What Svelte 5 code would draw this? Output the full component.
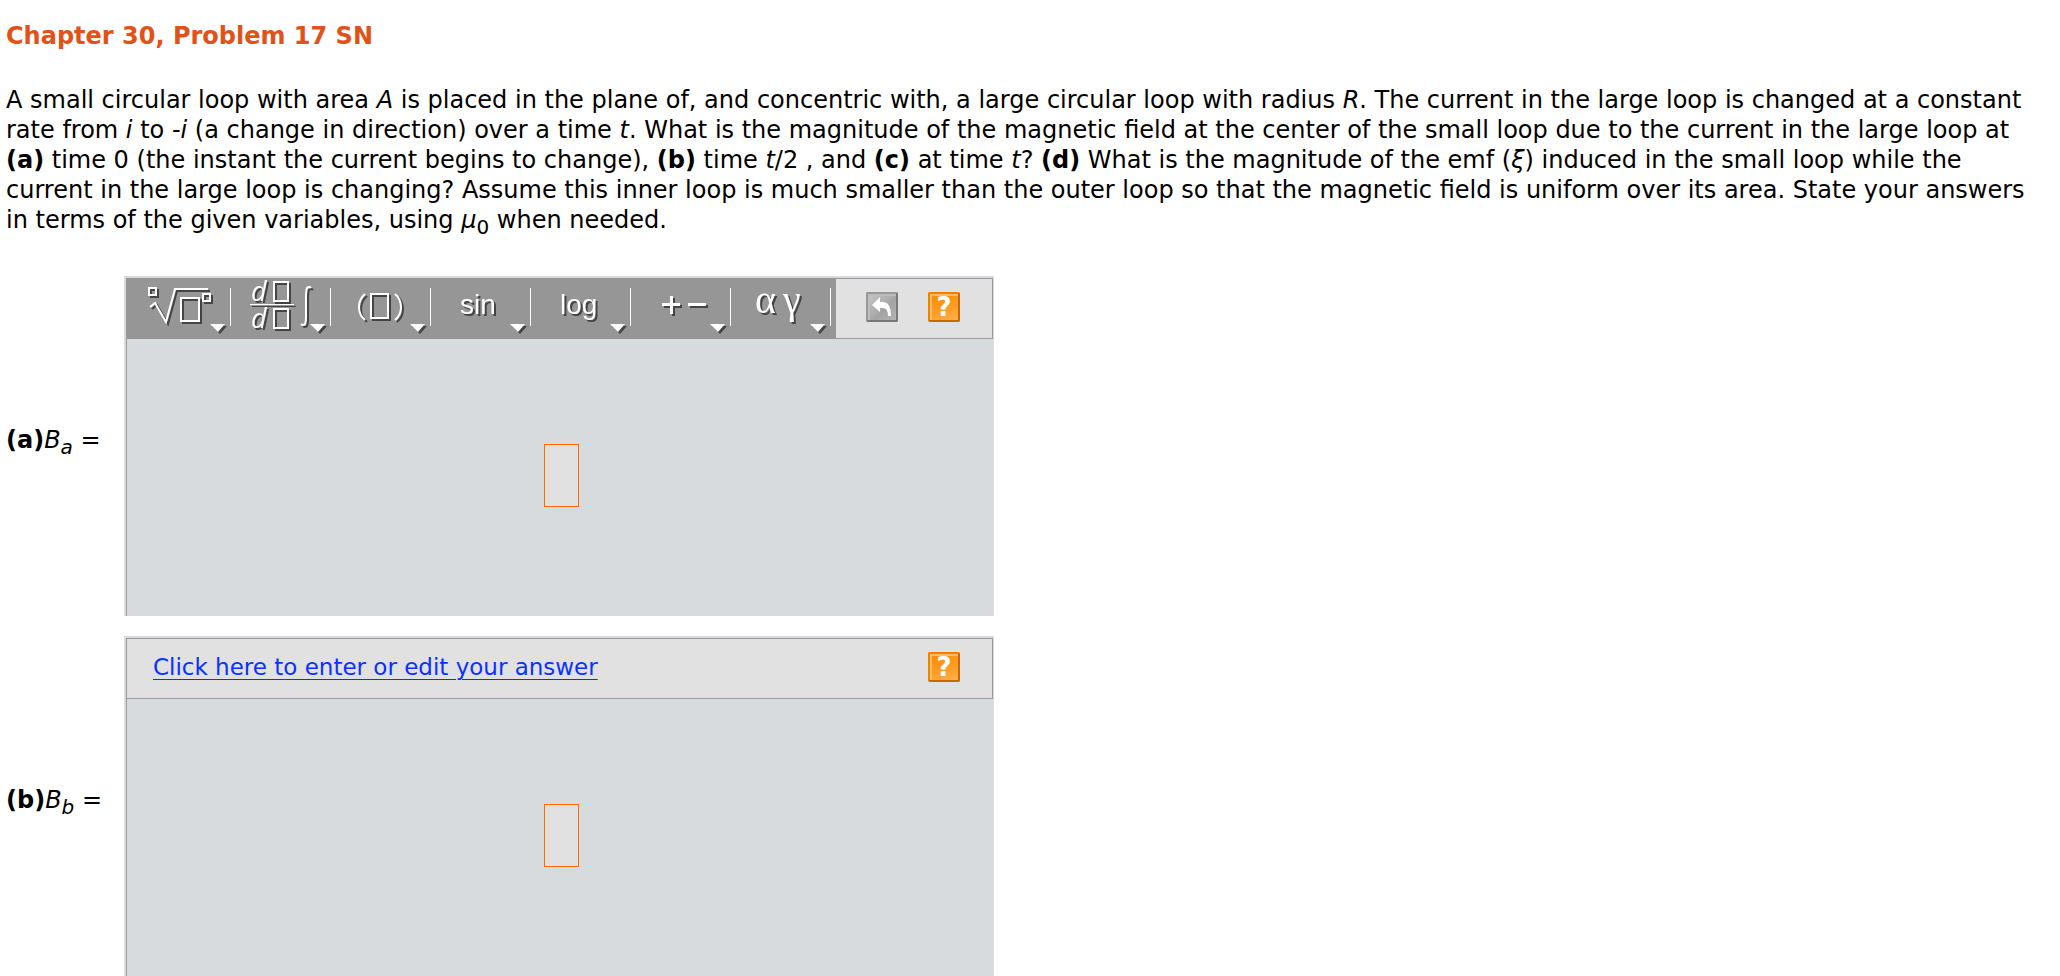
<script>
	const tools = [
		{ id: 'root', label: 'Roots and powers' },
		{ id: 'calculus', label: 'Derivatives and integrals' },
		{ id: 'brackets', label: 'Brackets' },
		{ id: 'sin', label: 'Trigonometric functions' },
		{ id: 'log', label: 'Logarithms' },
		{ id: 'operators', label: 'Operators' },
		{ id: 'greek', label: 'Greek letters' }
	];

	let parts = $state([
		{ id: 'a', editing: true },
		{ id: 'b', editing: false }
	]);

	function edit(e, id) {
		e.preventDefault();
		for (const p of parts) p.editing = p.id === id;
	}
</script>

<svelte:head><title>Chapter 30, Problem 17 SN</title></svelte:head>

{#snippet glyph(id)}
	{#if id === 'root'}
		<rect x="18" y="10" width="7" height="7" />
		<path d="M19 29 L24 25 L35 44 L44 11 H77" />
		<rect x="50" y="20" width="18" height="23" />
		<rect x="72" y="16" width="7" height="7" />
	{:else if id === 'calculus'}
		<text class="d" x="20" y="23">d</text>
		<rect x="43" y="4" width="14" height="19" />
		<path class="thin" d="M19 26.5 H63" />
		<text class="d" x="20" y="50">d</text>
		<rect x="43" y="31" width="14" height="19" />
		<path d="M80 10 Q78 8 76 10 Q75 12 75 17 V39 Q75 44 74 46 Q72 48 70 46" />
	{:else if id === 'brackets'}
		<path d="M34 16 Q28 21 28 29 Q28 37 34 42" />
		<rect x="40" y="16" width="17" height="24" />
		<path d="M64 16 Q70 21 70 29 Q70 37 64 42" />
	{:else if id === 'operators'}
		<path class="thick" d="M31 26.5 H49 M40.5 18 V36 M57 26.5 H75" />
	{:else if id === 'greek'}
		<text class="greek" x="24" y="35">α</text>
		<text class="greek" x="52" y="35">γ</text>
	{:else}
		<text x="29" y="36">{id}</text>
	{/if}
{/snippet}

{#snippet help()}
	<button class="square help" aria-label="Help">?</button>
{/snippet}

<main>
	<h1>Chapter 30, Problem 17 SN</h1>

	<p>
		A small circular loop with area <i>A</i> is placed in the plane of, and concentric with, a large circular loop with radius <i>R</i>. The current in the large loop is changed at a constant<br />
		rate from <i>i</i> to -<i>i</i> (a change in direction) over a time <i>t</i>. What is the magnitude of the magnetic field at the center of the small loop due to the current in the large loop at<br />
		<b>(a)</b> time 0 (the instant the current begins to change), <b>(b)</b> time <i>t</i>/2 , and <b>(c)</b> at time <i>t</i>? <b>(d)</b> What is the magnitude of the emf (<i>ξ</i>) induced in the small loop while the<br />
		current in the large loop is changing? Assume this inner loop is much smaller than the outer loop so that the magnetic field is uniform over its area. State your answers<br />
		in terms of the given variables, using <i>μ</i><sub>0</sub> when needed.
	</p>

	{#each parts as part (part.id)}
		<div class="part">
			<div class="name"><b>({part.id})</b><i>B<sub>{part.id}</sub></i> =</div>
			<section class="editor" aria-label="Answer {part.id}">
				<header>
					{#if part.editing}
						<div class="tools">
							{#each tools as tool (tool.id)}
								<button class="tool" aria-label={tool.label}>
									<svg viewBox="0 0 100 61" width="100" height="61">
										<g class="face">{@render glyph(tool.id)}</g>
										<path class="raised" d="M79 46 H94 L87 54 Z" fill="#fff" />
										<rect x="99" y="10" width="1" height="38" fill="#fff" />
									</svg>
								</button>
							{/each}
						</div>
						<div class="actions">
							<button class="square undo" aria-label="Undo">
								<svg viewBox="0 0 24 22" width="24" height="22">
									<path d="M2 9 L10 1 V6 H14 Q21 7 21 20 H18 Q18 12 13 12 H10 V16 Z" fill="#fff" />
								</svg>
							</button>
							{@render help()}
						</div>
					{:else}
						<a href="#edit-{part.id}" onclick={(e) => edit(e, part.id)}>Click here to enter or edit your answer</a>
						<div class="actions">{@render help()}</div>
					{/if}
				</header>
				<div class="canvas">
					<button class="slot" aria-label="Empty expression"></button>
				</div>
			</section>
		</div>
	{/each}
</main>

<style>
	:global(body) { margin: 0; background: #fff; }
	main {
		padding: 21px 6px 0;
		font: 24px/30px "DejaVu Sans", Verdana, sans-serif;
		color: #000;
	}
	h1 { margin: 0 0 34px; font-size: 24px; line-height: 30px; color: #e25218; }
	p { margin: 0 0 41px; white-space: nowrap; }
	sub { font-size: 20px; line-height: 0; }
	button { margin: 0; padding: 0; border: none; background: none; cursor: pointer; }

	.part { display: flex; align-items: center; margin-bottom: 20px; }
	.part:last-child { margin-bottom: 0; }
	.name { width: 118px; padding-bottom: 12px; white-space: nowrap; }
	.editor {
		width: 870px; box-sizing: border-box;
		border: solid #d8dadd; border-width: 2px 0 0 2px;
		background: #d7dbde;
	}
	header {
		display: flex; align-items: center; justify-content: space-between;
		height: 61px; box-sizing: border-box; margin-right: 1px; padding-bottom: 4px;
		border: 1px solid #999; background: #e1e1e1;
	}
	.tools {
		display: flex; align-self: flex-start;
		padding: 0 5px; margin: -1px 0 0 -1px; background: #969696;
	}
	.tool { height: 61px; }
	.tool svg { display: block; overflow: visible; }
	.face { fill: none; stroke: #fff; stroke-width: 2; }
	.face, .raised { filter: drop-shadow(2px 2px 0 #444); }
	.thin { stroke-width: 1; }
	.thick { stroke-width: 3; }
	text { font: 28px "Liberation Sans", Arial, sans-serif; fill: #fff; stroke: none; }
	.d { font: italic 27px "Open Sans", sans-serif; }
	.greek { font: 40px "Liberation Serif", serif; }

	.actions { display: flex; gap: 30px; padding-right: 32px; }
	.square {
		display: flex; align-items: center; justify-content: center;
		width: 32px; height: 30px; box-sizing: border-box;
		border: 2px solid; border-radius: 2px;
	}
	.undo {
		border-color: #999 #777 #777 #999;
		background: linear-gradient(135deg, #c8c8c8, #a4a4a4 60%, #b4b4b4);
		box-shadow: inset 2px 2px #bdbdbd;
	}
	.help {
		border-color: #ee8300 #c96a00 #c96a00 #ee8300;
		background: linear-gradient(160deg, #f68b00, #ff9d26 60%, #ffb04c);
		box-shadow: inset 2px 2px #ffbd66;
		font: bold 26px/26px "DejaVu Sans", Verdana, sans-serif; color: #fff;
	}
	a {
		margin-left: 26px; font-size: 23px; color: #0a32ff;
		text-underline-offset: 4px; text-decoration-thickness: 1px;
	}
	.canvas {
		display: flex; align-items: center; justify-content: center;
		height: 277px; box-sizing: border-box; padding: 0 0 4px 1px;
		border-left: 1px solid #999;
	}
	.slot { width: 35px; height: 63px; border: 1px solid #ff6a00; background: #e1e1e1; }
</style>
